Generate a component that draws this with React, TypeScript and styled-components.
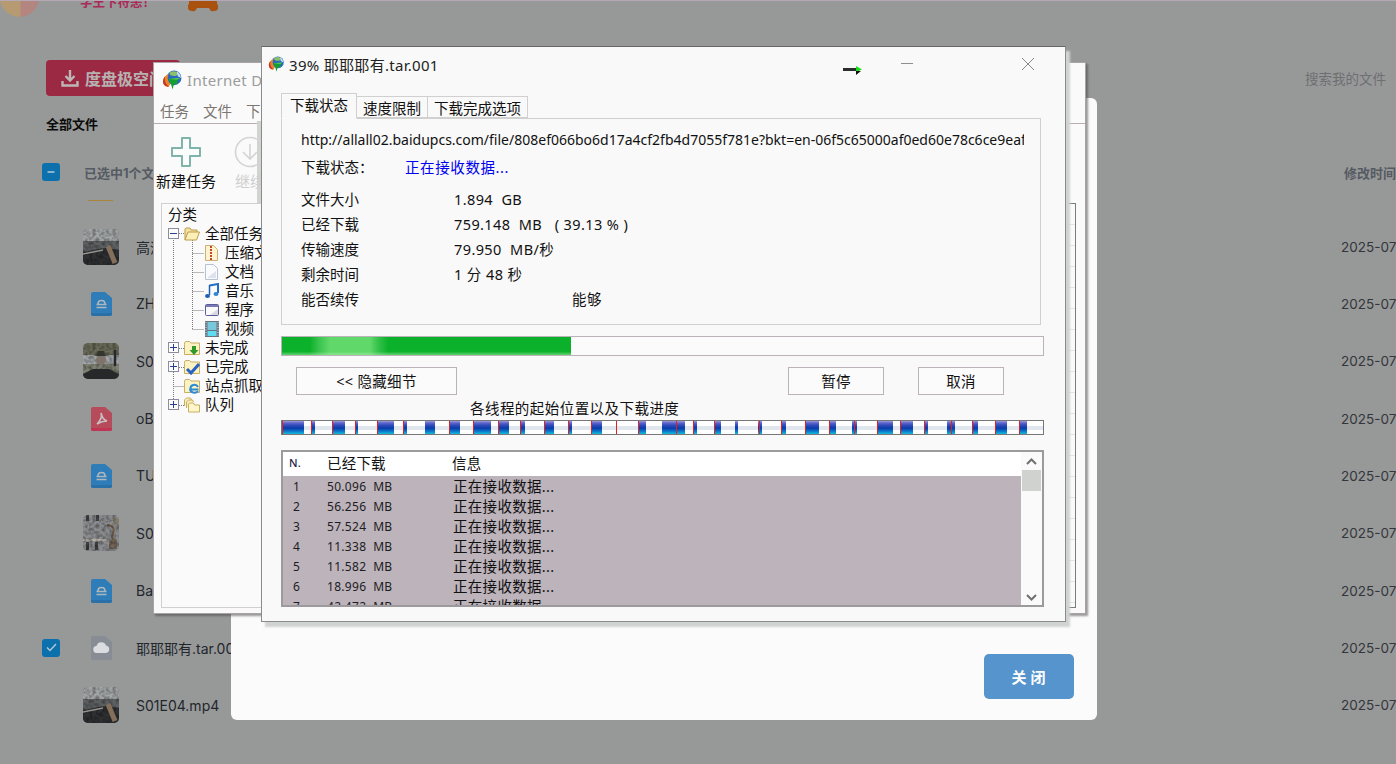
import styled, { createGlobalStyle } from "styled-components";

const uiFont = `"Noto Sans", "Noto Sans CJK SC", sans-serif`;
const webFont = `Inter, "Noto Sans CJK SC", sans-serif`;

const GlobalStyle = createGlobalStyle`
    html, body { margin: 0; padding: 0; background: #979998; }
    * { box-sizing: border-box; }
    #root { width: 1396px; height: 764px; overflow: hidden; position: relative; }
`;

// background page, dimmed
const Page = styled.div`
    width: 1396px;
    height: 764px;
    overflow: hidden;
    background: #979998;
    border-top: 1px solid #b6a9b6;
    font-family: ${webFont};
`;
const TopStrip = styled.div`
    height: 16px;
    display: flex;
    overflow: hidden;
`;
const Avatar = styled.div`
    width: 39px;
    height: 39px;
    margin-top: -23px;
    border-radius: 50%;
    background: linear-gradient(90deg, #b59a72 0, #b59a72 50%, #b5857f 55%, #b08682 100%);
    flex: none;
`;
const PromoText = styled.div`
    margin: -6px 0 0 41px;
    width: 108px;
    flex: none;
    color: #a82a58;
    font-size: 12.5px;
    font-weight: 600;
    line-height: 16px;
`;
const Actions = styled.div`
    height: 36px;
    margin: 43px 10px 0 46px;
    display: flex;
    align-items: center;
    justify-content: space-between;
`;
const UploadButton = styled.div`
    width: 134px;
    height: 36px;
    padding-left: 15px;
    display: flex;
    align-items: center;
    gap: 6px;
    border-radius: 4px;
    background: #9c2943;
    color: #b7b2b2;
    font-size: 16px;
    font-weight: 700;
    white-space: nowrap;
    overflow: hidden;
`;
const SearchHint = styled.div`
    color: #6d6f72;
    font-size: 13.5px;
`;
const Crumb = styled.div`
    margin: 18px 0 0 46px;
    height: 20px;
    line-height: 20px;
    color: #0b0b0b;
    font-size: 13px;
    font-weight: 700;
`;
const ListHead = styled.div`
    margin: 28px 0 0 42px;
    height: 20px;
    display: flex;
    align-items: center;
    color: #565a63;
    font-size: 13px;
    font-weight: 700;
`;
const HeadName = styled.div`
    margin-left: 24px;
    width: 1262px;
`;
const HeadTime = styled.div`
    white-space: nowrap;
`;
const Check = styled.span`
    width: 18px;
    height: 18px;
    flex: none;
    border-radius: 3px;
    background: #0c70ad;
    display: flex;
    align-items: center;
    justify-content: center;
`;
const SortLine = styled.div`
    width: 25px;
    height: 1px;
    margin: 18px 0 0 88px;
    background: #a9843a;
`;
const FileList = styled.div`
    margin: 17px 0 0 42px;
`;
const FileRow = styled.div`
    height: 57.33px;
    width: 1420px;
    display: grid;
    grid-template-columns: 18px 23px 36px 17px 1205px 100px;
    align-items: center;
    color: #23262d;
    font-size: 14px;
`;
const CheckSlot = styled.div`
    display: flex;
`;
const ThumbSlot = styled.div`
    display: flex;
    justify-content: center;
    align-items: center;
    border-radius: 5px;
    overflow: hidden;
    height: 36px;
`;
const RowName = styled.div`
    white-space: nowrap;
`;
const RowDate = styled.div`
    color: #33363b;
    font-size: 13.5px;
    white-space: nowrap;
`;

// modal behind the IDM windows
const Modal = styled.div`
    position: absolute;
    left: 231px;
    top: 98px;
    width: 866px;
    height: 622px;
    background: #fbfbfc;
    border-radius: 6px;
    display: flex;
    align-items: flex-end;
    justify-content: flex-end;
    padding: 0 23px 21px 0;
`;
const CloseButton = styled.div`
    width: 90px;
    height: 45px;
    border-radius: 5px;
    background: #5594cc;
    color: #fff;
    font-family: ${webFont};
    font-size: 15px;
    font-weight: 700;
    letter-spacing: 4px;
    padding-left: 3px;
    display: flex;
    align-items: center;
    justify-content: center;
`;

// IDM main window
const MainWindow = styled.div`
    position: absolute;
    left: 153px;
    top: 62px;
    width: 933px;
    height: 552px;
    background: #fafafa;
    border: 1px solid #a9a3a8;
    box-shadow: 2px 2px 2px rgba(70, 70, 70, 0.55);
    display: flex;
    flex-direction: column;
    font-family: ${uiFont};
`;
const MainTitle = styled.div`
    height: 34px;
    padding: 0 0 0 8px;
    display: flex;
    align-items: center;
    gap: 4px;
    color: #9c9c9c;
    font-size: 15px;
    letter-spacing: 0.3px;
    white-space: nowrap;
`;
const MenuBar = styled.div`
    height: 27px;
    padding-left: 6px;
    display: flex;
    gap: 14px;
    align-items: center;
    color: #7c7672;
    font-size: 14.5px;
    border-bottom: 1px solid #b7aeb5;
`;
const Toolbar = styled.div`
    height: 79px;
    position: relative;
    display: flex;
    padding: 12px 0 0 2px;
    gap: 4px;
`;
const ToolButton = styled.div<{ $off?: boolean }>`
    width: 60px;
    position: relative;
    display: flex;
    flex-direction: column;
    align-items: center;
    gap: 3px;
    color: ${(p) => (p.$off ? "#cfcfcf" : "#111")};
    font-size: 15px;
    line-height: 20px;
    white-space: nowrap;
`;
const ToolbarEdge = styled.div`
    position: absolute;
    left: 103px;
    top: -3px;
    bottom: 0;
    width: 4px;
    background: #d2d4d2;
`;
const MainBody = styled.div`
    flex: 1;
    display: flex;
    padding: 0 9px 5px 7px;
    gap: 2px;
`;
const TreePanel = styled.div`
    width: 300px;
    position: relative;
    border: 1px solid #d0d0d0;
    padding-top: 1px;
    color: #111;
    font-size: 14.5px;
`;
const TreeRow = styled.div<{ $level?: number }>`
    height: 19px;
    display: flex;
    align-items: center;
    padding-left: ${(p) => (p.$level ? 43 : 6)}px;
    gap: ${(p) => (p.$level ? 6 : 5)}px;
    white-space: nowrap;
    position: relative;
`;
const TreeText = styled.span`
    line-height: 19px;
`;
const IconSlot = styled.span<{ $level?: number }>`
    width: ${(p) => (p.$level ? 14 : 16)}px;
    flex: none;
    display: flex;
    align-items: center;
`;
const Expander = styled.span<{ $open?: boolean }>`
    width: 11px;
    height: 11px;
    flex: none;
    border: 1px solid #8c8c9a;
    background: #fcfcfc;
    position: relative;
    &::before {
        content: "";
        position: absolute;
        left: 1px;
        right: 1px;
        top: 4px;
        height: 1px;
        background: #2b3f8f;
    }
    &::after {
        content: "";
        position: absolute;
        top: 1px;
        bottom: 1px;
        left: 4px;
        width: 1px;
        background: ${(p) => (p.$open ? "transparent" : "#2b3f8f")};
    }
`;
const ExpanderGap = styled.span`
    width: 11px;
    flex: none;
`;
const TreeGuides = styled.svg`
    position: absolute;
    left: 0;
    top: 0;
    pointer-events: none;
`;
const TaskList = styled.div`
    flex: 1;
    border: 1px solid #787d80;
    background: repeating-linear-gradient(180deg, #fafafa 0, #fafafa 20px, #e4e4e4 20px, #e4e4e4 21px);
`;

// download dialog
const Dialog = styled.div`
    position: absolute;
    left: 261px;
    top: 46px;
    width: 805px;
    height: 576px;
    background: #f9f9f9;
    border: 1px solid #8b8b8b;
    border-top-color: #666;
    box-shadow: 4px 5px 2px #cfd3d1;
    padding: 0 21px 0 19px;
    font-family: ${uiFont};
    color: #111;
    font-size: 14.5px;
`;
const TitleBar = styled.div`
    height: 46px;
    margin: 0 10px 0 -13px;
    padding-bottom: 12px;
    display: flex;
    align-items: center;
    gap: 4px;
    color: #222;
    position: relative;
`;
const DialogTitle = styled.div`
    font-size: 15px;
    letter-spacing: 0.3px;
    white-space: nowrap;
`;
const MinimizeGlyph = styled.span`
    width: 12px;
    height: 1px;
    margin: 0 105px 2px auto;
    background: #8e8e8e;
`;
const CursorArrow = styled.svg`
    position: absolute;
    left: 575px;
    top: 19px;
`;
const Tabs = styled.div`
    height: 25px;
    display: flex;
    align-items: flex-end;
`;
const Tab = styled.div<{ $active?: boolean }>`
    height: ${(p) => (p.$active ? 26 : 22)}px;
    padding: 0 ${(p) => (p.$active ? 8 : 6)}px;
    margin-bottom: ${(p) => (p.$active ? -1 : 0)}px;
    border: 1px solid #d0d0d0;
    border-left-width: ${(p) => (p.$active ? 1 : 0)}px;
    border-bottom-color: ${(p) => (p.$active ? "#f9f9f9" : "#d0d0d0")};
    background: #f9f9f9;
    position: relative;
    z-index: ${(p) => (p.$active ? 1 : 0)};
    line-height: 22px;
    white-space: nowrap;
`;
const InfoPanel = styled.div`
    height: 207px;
    width: 760px;
    border: 1px solid #d0d0d0;
    padding: 11px 16px 0 19px;
`;
const UrlLine = styled.div`
    height: 20px;
    line-height: 20px;
    overflow: hidden;
    white-space: nowrap;
    font-size: 14px;
`;
const StatusLine = styled.div`
    height: 20px;
    margin-top: 7px;
    display: grid;
    grid-template-columns: 104px 1fr;
    line-height: 20px;
`;
const StatusValue = styled.span`
    color: #0000f0;
    letter-spacing: 0.6px;
`;
const InfoRows = styled.div`
    margin-top: 9px;
`;
const InfoRow = styled.div`
    height: 25px;
    display: grid;
    grid-template-columns: 153px 1fr;
    align-items: center;
    white-space: pre;
`;
const InfoValue = styled.span<{ $far?: boolean }>`
    padding-left: ${(p) => (p.$far ? 118 : 0)}px;
    letter-spacing: 0.4px;
`;
const ProgressTrack = styled.div`
    height: 20px;
    width: 763px;
    margin-top: 11px;
    border: 1px solid #bcb2ba;
    background: #fbfbfb;
`;
const ProgressFill = styled.div`
    height: 100%;
    background:
        linear-gradient(180deg, rgba(255, 255, 255, 0) 80%, rgba(170, 240, 170, 0.55) 100%),
        linear-gradient(
            90deg,
            #0bb12a 0,
            #0bb12a 28px,
            #35c24b 36px,
            #60d96a 48px,
            #60d96a 88px,
            #35c24b 96px,
            #0bb12a 106px
        );
`;
const ButtonRow = styled.div`
    margin-top: 11px;
    padding-left: 15px;
    display: flex;
`;
const DialogButton = styled.div<{ $width: number; $gap?: number }>`
    width: ${(p) => p.$width}px;
    height: 28px;
    margin-left: ${(p) => p.$gap ?? 0}px;
    border: 1px solid #bcb2ba;
    background: #fbfbfb;
    display: flex;
    align-items: center;
    justify-content: center;
    line-height: 1;
    letter-spacing: 0.3px;
    white-space: pre;
`;
const ThreadCaption = styled.div`
    height: 25px;
    padding: 3px 0 0 189px;
    line-height: 20px;
    letter-spacing: 0.45px;
`;
const ThreadBar = styled.div`
    position: relative;
    width: 763px;
    height: 15px;
    border: 1px solid #777;
    background: linear-gradient(180deg, #fff 0, #fff 40%, #e0e6ee 40%, #e0e6ee 70%, #fff 70%, #fff 100%);
    overflow: hidden;
`;
const ThreadChunk = styled.span`
    position: absolute;
    top: 0;
    bottom: 0;
    background: linear-gradient(180deg, #9c9ce0 0, #5c62c8 16%, #2a48b8 36%, #0a3ca8 56%, #0a70c8 76%, #12bcdc 100%);
`;
const ThreadMark = styled.span`
    position: absolute;
    top: 0;
    bottom: 0;
    width: 1px;
    background: #e32020;
`;
const ThreadList = styled.div`
    width: 763px;
    height: 157px;
    margin-top: 15px;
    border: 2px solid #9c9a9c;
    display: flex;
    overflow: hidden;
`;
const ThreadRows = styled.div`
    flex: 1;
    overflow: hidden;
`;
const ColumnsHead = styled.div`
    height: 24px;
    background: #fff;
    display: grid;
    grid-template-columns: 38px 125px 1fr;
    align-items: center;
    padding: 0 0 4px 6px;
    letter-spacing: 0.2px;
`;
const HeadN = styled.span`
    color: #23234a;
    font-size: 11px;
    font-weight: 500;
`;
const ThreadRow = styled.div`
    height: 20px;
    background: #bdb3bb;
    display: grid;
    grid-template-columns: 34px 126px 1fr;
    align-items: center;
    padding-left: 10px;
    white-space: pre;
    line-height: 20px;
    letter-spacing: 0.3px;
`;
const Mono = styled.span`
    font-size: 12px;
    color: #1c1c24;
    position: relative;
    top: 1px;
`;
const ScrollBar = styled.div`
    width: 21px;
    background: #fafafa;
    display: flex;
    flex-direction: column;
    align-items: center;
    padding-top: 6px;
`;
const ScrollThumb = styled.div`
    width: 19px;
    height: 21px;
    margin-top: 5px;
    background: #d0d2d0;
`;
const ScrollDown = styled.div`
    margin-top: 94px;
`;

const IdmLogo = ({ size }: { size: number }) => (
    <svg width={size} height={size} viewBox="0 0 20 20">
        <circle cx="11.500" cy="7.500" r="7" fill="#2a68c2" />
        <path d="M7 2.500c3-2 7-1.500 8.500 1-1 2-3.500 2.500-5.500 2S7.500 4.500 7 2.500z" fill="#8cc06a" />
        <path d="M14 1.500c2 1 4 3.500 4 6l-3-1.500z" fill="#c8def4" />
        <path d="M1 11c0-3.500 2-6 5.500-7.500C5 6.500 5 10 8 13l-1.500 3C3 16 1 14 1 11z" fill="#e8862a" />
        <path d="M1 11c0-2 .8-3.500 2-5-.8 3.500 0 7 3 9.500l.5.500C3 16 1 14 1 11z" fill="#c8382a" />
        <path d="M6 8.500l11-1-2.500 3 .5 3-3.500-.5-1.500 5.500-1.500-5.500z" fill="#14a02c" />
        <path d="M6 8.500l11-1-2.500 1.500z" fill="#6ed060" />
    </svg>
);

const DocIcon = ({ kind }: { kind: "zip" | "pdf" | "cloud" }) => {
    const body = kind === "zip" ? "#2e7db9" : kind === "pdf" ? "#b64b5c" : "#878c95";
    const foot = kind === "zip" ? "#2a70a8" : kind === "pdf" ? "#bf3553" : "#878c95";
    return (
        <svg width="21" height="24" viewBox="0 0 21 24">
            <path d="M2 0h12l7 6v16a2 2 0 0 1-2 2H2a2 2 0 0 1-2-2V2a2 2 0 0 1 2-2z" fill={body} />
            <path d="M0 21h21v1a2 2 0 0 1-2 2H2a2 2 0 0 1-2-2z" fill={foot} />
            {kind === "zip" && (
                <g fill="none" stroke="#aeb7bd" strokeWidth="1.6">
                    <path d="M7 12c0-2 1.500-3.500 3.500-3.500S14 10 14 12" />
                    <path d="M5.500 12.500h10M5.500 15.500h10" />
                </g>
            )}
            {kind === "pdf" && (
                <path
                    d="M10 6c1 3 1 6-4 11 3-2 6-3 10-3-4-1-5-4-6-8z"
                    fill="none"
                    stroke="#c9bfc0"
                    strokeWidth="1.600"
                />
            )}
            {kind === "cloud" && (
                <path
                    d="M6 17a3.500 3.500 0 0 1-.5-7 5 5 0 0 1 9.500-.5 3.800 3.800 0 0 1 0 7.500z"
                    fill="#dadcdf"
                />
            )}
        </svg>
    );
};

// mottled overlay so the small photos read like photos
const Grain = () => (
    <>
        <filter id="grain" x="0" y="0" width="100%" height="100%">
            <feTurbulence type="fractalNoise" baseFrequency="0.3" numOctaves="2" seed="4" />
            <feColorMatrix values="0 0 0 0 0  0 0 0 0 0  0 0 0 0 0  1.800 0 0 0 -0.600" />
        </filter>
        <rect width="36" height="36" filter="url(#grain)" opacity="0.4" />
    </>
);

const StreetPhoto = () => (
    <svg width="36" height="36" viewBox="0 0 36 36">
        <rect width="36" height="36" fill="#55585a" />
        <rect width="36" height="12" fill="#a3a6a7" />
        <rect y="12" width="36" height="8" fill="#5e6163" />
        <path d="M0 23l22-4 14 2v15H0z" fill="#2f3032" />
        <Grain />
        <path d="M0 25l20-4" stroke="#92928e" strokeWidth="1.400" />
        <path d="M25 17l7 17" stroke="#84705a" strokeWidth="5" />
    </svg>
);

const ManPhoto = () => (
    <svg width="36" height="36" viewBox="0 0 36 36">
        <rect width="36" height="36" fill="#7e8072" />
        <rect width="36" height="12" fill="#6a6b58" />
        <rect y="12" width="36" height="9" fill="#a2a6a8" />
        <Grain />
        <path d="M0 36v-5l10-5h16l10 5v5z" fill="#26282a" />
        <circle cx="18" cy="17" r="5" fill="#7e746c" />
        <path d="M10 13h16l-4-1-1-4h-6l-1 4z" fill="#33352f" />
        <path d="M32 7v16" stroke="#25272a" strokeWidth="2.500" />
    </svg>
);

const HousePhoto = () => (
    <svg width="36" height="36" viewBox="0 0 36 36">
        <rect width="36" height="36" fill="#8b8d90" />
        <path d="M3 0h3v6H3zM13 0h3v6h-3zM3 27h3v8H3zM12 27h3v8h-3z" fill="#3e4042" />
        <path d="M0 24h24v2H0z" fill="#b5b1a6" />
        <path d="M24 10c6 0 8 4 6 8s0 8 4 10" fill="none" stroke="#6e5a46" strokeWidth="2" />
        <path d="M26 26l8-2v10h-8z" fill="#75685a" />
        <path d="M30 2h6v8h-6z" fill="#908a7c" />
        <Grain />
    </svg>
);

type TreeKind = "open" | "zip" | "doc" | "music" | "app" | "film" | "down" | "done" | "ie" | "queue";

const TreeIcon = ({ kind }: { kind: TreeKind }) => {
    const folder = (
        <path d="M.5 4.500V3l1-1.500h4L7 3h8.500v11.500H.5z" fill="#fbf3c4" stroke="#c9ae63" />
    );
    if (kind === "open")
        return (
            <svg width="16" height="16" viewBox="0 0 16 16">
                <path d="M1 14V3l1-1h4l1 2h6v2" fill="#f5e3a0" stroke="#bd9c4a" />
                <path d="M1 14l3-8h11.500l-3 8z" fill="#fbf0b8" stroke="#bd9c4a" />
            </svg>
        );
    if (kind === "zip")
        return (
            <svg width="13" height="16" viewBox="0 0 13 16">
                <path d="M.5.500h8l4 4v11H.5z" fill="#fdf3cf" stroke="#c8b27a" />
                <path d="M6 1v14" stroke="#c2452c" strokeWidth="2" strokeDasharray="2 1" />
            </svg>
        );
    if (kind === "doc")
        return (
            <svg width="13" height="16" viewBox="0 0 13 16">
                <path d="M.5.500h8l4 4v11H.5z" fill="#fafbfd" stroke="#b8c0d4" />
                <path d="M3 13l8-6v7H3z" fill="#dde2ec" />
            </svg>
        );
    if (kind === "music")
        return (
            <svg width="14" height="16" viewBox="0 0 14 16">
                <path d="M4.500 2.500L13 1v9" fill="none" stroke="#1f6fc4" strokeWidth="2" />
                <path d="M4.500 2v10" stroke="#1f5fb4" strokeWidth="1.500" />
                <ellipse cx="2.500" cy="13" rx="2.500" ry="2" fill="#1f5fb4" />
                <ellipse cx="11" cy="11" rx="2.500" ry="2" fill="#2f86d4" />
            </svg>
        );
    if (kind === "app")
        return (
            <svg width="14" height="14" viewBox="0 0 14 14">
                <rect x=".5" y="1.500" width="13" height="11" rx="1" fill="#fafafa" stroke="#5c5c9c" />
                <rect x="1" y="2" width="12" height="2" fill="#7a7ab4" />
                <path d="M5 12l8-6v6z" fill="#d8d8e0" />
            </svg>
        );
    if (kind === "film")
        return (
            <svg width="14" height="16" viewBox="0 0 14 16">
                <rect width="14" height="16" fill="#6a7480" />
                <rect x="2.500" y="1" width="9" height="8" fill="#78c8dc" />
                <rect x="2.500" y="10" width="9" height="5" fill="#5fdcf0" />
                <path d="M1 1v14M13 1v14" stroke="#dfe3e6" strokeDasharray="1 1.500" />
            </svg>
        );
    if (kind === "queue")
        return (
            <svg width="16" height="16" viewBox="0 0 16 16">
                <path d="M.5 9V3l2-2h4l1 2" fill="#f9efbc" stroke="#c9ae63" />
                <path d="M2.500 11V5l2-2h4l1 2" fill="#f9efbc" stroke="#c9ae63" />
                <path d="M4.500 15V7l1-1h4l1 2h5v7z" fill="#fdf6c8" stroke="#c9ae63" />
            </svg>
        );
    return (
        <svg width="16" height="16" viewBox="0 0 16 16">
            {folder}
            {kind === "down" && <path d="M8 6h4v4h2.500l-4.500 5-4.500-5H8z" fill="#2f9a2a" />}
            {kind === "done" && (
                <path d="M3 10l4 4 8-9" fill="none" stroke="#2a62c4" strokeWidth="3" />
            )}
            {kind === "ie" && (
                <g fill="none" stroke="#2d8ad8" strokeWidth="2">
                    <path d="M14.500 11.500h-8a4 4 0 0 1 7.500-2.500" />
                    <path d="M14 13a4.500 4.500 0 0 1-8 -2" />
                </g>
            )}
        </svg>
    );
};

const chunks: [number, number][] = [
    [282, 304], [311, 315], [332, 345], [355, 358], [377, 394], [403, 407], [425, 435], [449, 460],
    [473, 491], [498, 509], [520, 525], [544, 554], [568, 572], [591, 602], [638, 646], [662, 676],
    [676, 685], [693, 697], [714, 721], [735, 738], [758, 762], [781, 786], [805, 819], [829, 836],
    [852, 857], [877, 893], [900, 913], [924, 928], [947, 955], [972, 978], [995, 1007], [1019, 1027],
];
const marks = [
    282, 311, 332, 355, 377, 403, 449, 473, 498, 520, 544, 568, 591, 616, 638, 676, 693, 714, 759, 781,
    805, 829, 854, 877, 900, 924, 951, 972, 995, 1019,
];

const threads = ["50.096", "56.256", "57.524", "11.338", "11.582", "18.996", "42.472"];

const files = [
    { name: "高清电影合集.mp4", thumb: "street" },
    { name: "ZHANG-2025.zip", thumb: "zip" },
    { name: "S01E02.mp4", thumb: "man" },
    { name: "oBook.pdf", thumb: "pdf" },
    { name: "TUTORIAL.zip", thumb: "zip" },
    { name: "S01E03.mp4", thumb: "house" },
    { name: "Backup.zip", thumb: "zip" },
    { name: "耶耶耶有.tar.001", thumb: "cloud", checked: true },
    { name: "S01E04.mp4", thumb: "street" },
];

const FileThumb = ({ thumb }: { thumb: string }) => {
    if (thumb === "street") return <StreetPhoto />;
    if (thumb === "man") return <ManPhoto />;
    if (thumb === "house") return <HousePhoto />;
    return <DocIcon kind={thumb as "zip" | "pdf" | "cloud"} />;
};

const Chevron = ({ up }: { up?: boolean }) => (
    <svg width="11" height="7" viewBox="0 0 11 7">
        <path d={up ? "M1 6l4.500-4.500L10 6" : "M1 1l4.500 4.500L10 1"} fill="none" stroke="#707070" strokeWidth="2" />
    </svg>
);

const App = () => {
    return (
        <>
            <GlobalStyle />
            <Page>
                <TopStrip>
                    <Avatar />
                    <PromoText>字王下符恙！</PromoText>
                    <svg width="30" height="12" viewBox="0 0 30 12">
                        <path
                            d="M1 0h28v3a4 4 0 0 1-3 7c-3 1-4-1-5-3H9C8 9 7 11 4 10A4 4 0 0 1 1 3z"
                            fill="#a9520f"
                        />
                    </svg>
                </TopStrip>
                <Actions>
                    <UploadButton>
                        <svg width="18" height="18" viewBox="0 0 18 18">
                            <path
                                d="M9 1v10M4.500 7L9 11.500 13.500 7M1.500 12v4.500h15V12"
                                fill="none"
                                stroke="#bdb6b6"
                                strokeWidth="2.400"
                            />
                        </svg>
                        度盘极空间
                    </UploadButton>
                    <SearchHint>搜索我的文件</SearchHint>
                </Actions>
                <Crumb>全部文件</Crumb>
                <ListHead>
                    <Check>
                        <svg width="10" height="10" viewBox="0 0 10 10">
                            <path d="M1.500 5h7" stroke="#a9c3d4" strokeWidth="1.600" />
                        </svg>
                    </Check>
                    <HeadName>已选中1个文件</HeadName>
                    <HeadTime>修改时间</HeadTime>
                </ListHead>
                <SortLine />
                <FileList>
                    {files.map((file) => (
                        <FileRow key={file.name}>
                            <CheckSlot>
                                {file.checked && (
                                    <Check>
                                        <svg width="11" height="9" viewBox="0 0 11 9">
                                            <path d="M1 4.500L4 7.500 10 1" fill="none" stroke="#b4c9d6" strokeWidth="1.400" />
                                        </svg>
                                    </Check>
                                )}
                            </CheckSlot>
                            <span />
                            <ThumbSlot>
                                <FileThumb thumb={file.thumb} />
                            </ThumbSlot>
                            <span />
                            <RowName>{file.name}</RowName>
                            <RowDate>2025-07-12 10:26</RowDate>
                        </FileRow>
                    ))}
                </FileList>
            </Page>

            <Modal>
                <CloseButton>关闭</CloseButton>
            </Modal>

            <MainWindow>
                <MainTitle>
                    <IdmLogo size={21} />
                    Internet Download Manager 6.42
                </MainTitle>
                <MenuBar>
                    <span>任务</span>
                    <span>文件</span>
                    <span>下载</span>
                </MenuBar>
                <Toolbar>
                    <ToolbarEdge />
                    <ToolButton>
                        <svg width="32" height="32" viewBox="0 0 32 32">
                            <path
                                d="M12 2h8v10h10v8H20v10h-8V20H2v-8h10z"
                                fill="#fbfdfc"
                                stroke="#7fb3ac"
                                strokeWidth="2"
                                strokeLinejoin="round"
                            />
                        </svg>
                        新建任务
                    </ToolButton>
                    <ToolButton $off>
                        <svg width="32" height="32" viewBox="0 0 32 32">
                            <circle cx="16" cy="16" r="14.500" fill="none" stroke="#d4d4d4" strokeWidth="1.600" />
                            <path d="M16 8v15M9 16l7 7 7-7" fill="none" stroke="#d4d4d4" strokeWidth="1.600" />
                        </svg>
                        继续
                    </ToolButton>
                </Toolbar>
                <MainBody>
                    <TreePanel>
                        <TreeGuides width="60" height="210">
                            <g fill="none" stroke="#7a7a7a" strokeDasharray="1 1">
                                <path d="M11.500 36V202M30.500 36V125M17 29.500h5M17 144.500h5M17 163.500h5M11.500 182.500h11M17 201.500h5" />
                                <path d="M30.500 49.500h11M30.500 68.500h11M30.500 87.500h11M30.500 106.500h11M30.500 125.500h11" />
                            </g>
                        </TreeGuides>
                        <TreeRow>
                            <TreeText>分类</TreeText>
                        </TreeRow>
                        <TreeRow>
                            <Expander $open />
                            <IconSlot><TreeIcon kind="open" /></IconSlot>
                            <TreeText>全部任务</TreeText>
                        </TreeRow>
                        <TreeRow $level={1}>
                            <IconSlot $level={1}><TreeIcon kind="zip" /></IconSlot>
                            <TreeText>压缩文件</TreeText>
                        </TreeRow>
                        <TreeRow $level={1}>
                            <IconSlot $level={1}><TreeIcon kind="doc" /></IconSlot>
                            <TreeText>文档</TreeText>
                        </TreeRow>
                        <TreeRow $level={1}>
                            <IconSlot $level={1}><TreeIcon kind="music" /></IconSlot>
                            <TreeText>音乐</TreeText>
                        </TreeRow>
                        <TreeRow $level={1}>
                            <IconSlot $level={1}><TreeIcon kind="app" /></IconSlot>
                            <TreeText>程序</TreeText>
                        </TreeRow>
                        <TreeRow $level={1}>
                            <IconSlot $level={1}><TreeIcon kind="film" /></IconSlot>
                            <TreeText>视频</TreeText>
                        </TreeRow>
                        <TreeRow>
                            <Expander />
                            <IconSlot><TreeIcon kind="down" /></IconSlot>
                            <TreeText>未完成</TreeText>
                        </TreeRow>
                        <TreeRow>
                            <Expander />
                            <IconSlot><TreeIcon kind="done" /></IconSlot>
                            <TreeText>已完成</TreeText>
                        </TreeRow>
                        <TreeRow>
                            <ExpanderGap />
                            <IconSlot><TreeIcon kind="ie" /></IconSlot>
                            <TreeText>站点抓取</TreeText>
                        </TreeRow>
                        <TreeRow>
                            <Expander />
                            <IconSlot><TreeIcon kind="queue" /></IconSlot>
                            <TreeText>队列</TreeText>
                        </TreeRow>
                    </TreePanel>
                    <TaskList />
                </MainBody>
            </MainWindow>

            <Dialog>
                <TitleBar>
                    <IdmLogo size={17} />
                    <DialogTitle>39% 耶耶耶有.tar.001</DialogTitle>
                    <MinimizeGlyph />
                    <svg width="12" height="12" viewBox="0 0 12 12">
                        <path d="M0 0l12 12M12 0L0 12" stroke="#8a8a8a" strokeWidth="1" />
                    </svg>
                    <CursorArrow width="21" height="10" viewBox="0 0 21 10">
                        <path d="M0 2h13v3H0z" fill="#2a2d2e" />
                        <path d="M13 6l6-2.500L13 0z" fill="#18e018" />
                        <path d="M13 9V5h5z" fill="#111" />
                    </CursorArrow>
                </TitleBar>
                <Tabs>
                    <Tab $active>下载状态</Tab>
                    <Tab>速度限制</Tab>
                    <Tab>下载完成选项</Tab>
                </Tabs>
                <InfoPanel>
                    <UrlLine>
                        http://allall02.baidupcs.com/file/808ef066bo6d17a4cf2fb4d7055f781e?bkt=en-06f5c65000af0ed60e78c6ce9eaf6c2b1d
                    </UrlLine>
                    <StatusLine>
                        <span>下载状态：</span>
                        <StatusValue>正在接收数据...</StatusValue>
                    </StatusLine>
                    <InfoRows>
                        <InfoRow>
                            <span>文件大小</span>
                            <InfoValue>1.894  GB</InfoValue>
                        </InfoRow>
                        <InfoRow>
                            <span>已经下载</span>
                            <InfoValue>759.148  MB   ( 39.13 % )</InfoValue>
                        </InfoRow>
                        <InfoRow>
                            <span>传输速度</span>
                            <InfoValue>79.950  MB/秒</InfoValue>
                        </InfoRow>
                        <InfoRow>
                            <span>剩余时间</span>
                            <InfoValue>1 分 48 秒</InfoValue>
                        </InfoRow>
                        <InfoRow>
                            <span>能否续传</span>
                            <InfoValue $far>能够</InfoValue>
                        </InfoRow>
                    </InfoRows>
                </InfoPanel>
                <ProgressTrack>
                    <ProgressFill style={{ width: "38%" }} />
                </ProgressTrack>
                <ButtonRow>
                    <DialogButton $width={161}>{"<< 隐藏细节"}</DialogButton>
                    <DialogButton $width={96} $gap={331}>暂停</DialogButton>
                    <DialogButton $width={86} $gap={34}>取消</DialogButton>
                </ButtonRow>
                <ThreadCaption>各线程的起始位置以及下载进度</ThreadCaption>
                <ThreadBar>
                    {chunks.map(([from, to]) => (
                        <ThreadChunk key={from} style={{ left: from - 282, width: to - from }} />
                    ))}
                    {marks.map((at) => (
                        <ThreadMark key={at} style={{ left: at - 282 }} />
                    ))}
                </ThreadBar>
                <ThreadList>
                    <ThreadRows>
                        <ColumnsHead>
                            <HeadN>N.</HeadN>
                            <span>已经下载</span>
                            <span>信息</span>
                        </ColumnsHead>
                        {threads.map((size, i) => (
                            <ThreadRow key={size}>
                                <Mono>{i + 1}</Mono>
                                <Mono>{size}  MB</Mono>
                                <span>正在接收数据...</span>
                            </ThreadRow>
                        ))}
                    </ThreadRows>
                    <ScrollBar>
                        <Chevron up />
                        <ScrollThumb />
                        <ScrollDown>
                            <Chevron />
                        </ScrollDown>
                    </ScrollBar>
                </ThreadList>
            </Dialog>
        </>
    );
};

export default App;
